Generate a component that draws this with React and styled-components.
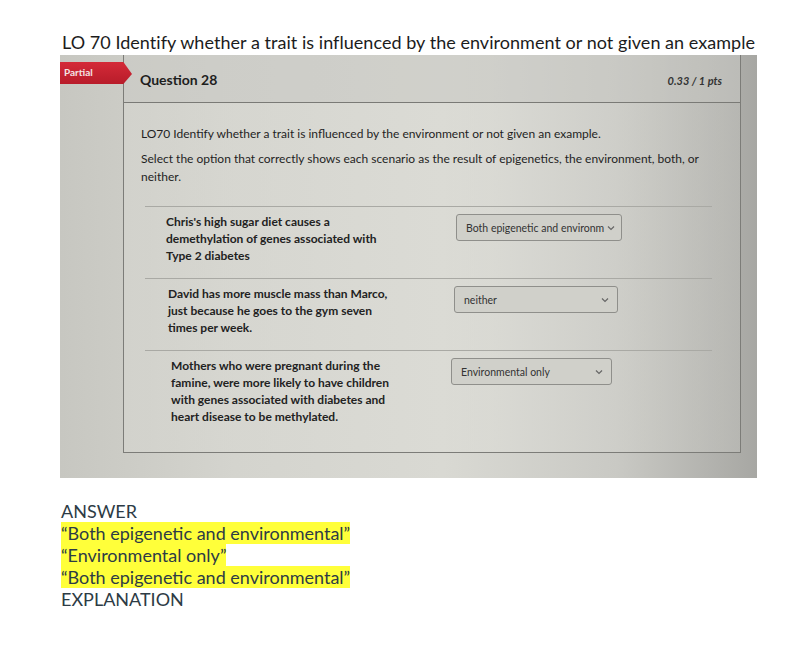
import React from "react";
import styled, { createGlobalStyle } from "styled-components";

const GlobalStyle = createGlobalStyle`
  body {
    margin: 0;
    background: #ffffff;
    font-family: Lato, "Open Sans", sans-serif;
  }
`;

const rows = [
  {
    text: "Chris's high sugar diet causes a demethylation of genes associated with Type 2 diabetes",
    choice: "Both epigenetic and environm",
    shift: 0,
  },
  {
    text: "David has more muscle mass than Marco, just because he goes to the gym seven times per week.",
    choice: "neither",
    shift: 2,
  },
  {
    text: "Mothers who were pregnant during the famine, were more likely to have children with genes associated with diabetes and heart disease to be methylated.",
    choice: "Environmental only",
    shift: 5,
  },
];

const answers = [
  "“Both epigenetic and environmental”",
  "“Environmental only”",
  "“Both epigenetic and environmental”",
];

export default function App() {
  return (
    <Page>
      <GlobalStyle />
      <Title>LO 70 Identify whether a trait is influenced by the environment or not given an example</Title>
      <Photo>
        <Badge>Partial</Badge>
        <Card>
          <CardHeader>
            <QuestionName>Question 28</QuestionName>
            <Points>0.33 / 1 pts</Points>
          </CardHeader>
          <CardBody>
            <Prompt>LO70 Identify whether a trait is influenced by the environment or not given an example.</Prompt>
            <Prompt $gap>
              Select the option that correctly shows each scenario as the result of epigenetics, the environment, both, or neither.
            </Prompt>
            <Matches>
              {rows.map((r) => (
                <MatchRow key={r.choice} $shift={r.shift}>
                  <Scenario>{r.text}</Scenario>
                  <Select $shift={r.shift}>
                    <span>{r.choice}</span>
                    <svg width="8" height="6" viewBox="0 0 8 6">
                      <path d="M1 1.5 L4 4.5 L7 1.5" fill="none" stroke="#666" strokeWidth="1.2" />
                    </svg>
                  </Select>
                </MatchRow>
              ))}
            </Matches>
          </CardBody>
        </Card>
      </Photo>
      <Answer>
        <Line>ANSWER</Line>
        {answers.map((a, i) => (
          <Line key={i}>
            <Mark>{a}</Mark>
          </Line>
        ))}
        <Line>EXPLANATION</Line>
      </Answer>
    </Page>
  );
}

const Page = styled.div`
  width: 795px;
  padding: 30px 0 0 60px;
  box-sizing: border-box;
`;

const Title = styled.div`
  font-family: Lato, sans-serif;
  font-size: 18px;
  line-height: 24px;
  color: #1c1c1c;
  margin-left: 2px;
  white-space: nowrap;
  letter-spacing: 0.04px;
`;

const Photo = styled.div`
  position: relative;
  width: 697px;
  height: 423px;
  margin-top: 1px;
  padding: 0 16px 26px 63px;
  box-sizing: border-box;
  background: linear-gradient(90deg, #c7c7c1 0%, #d4d4ce 25%, #d9d9d3 55%, #c9c9c4 80%, #a7a7a3 100%);
  overflow: hidden;
`;

const Badge = styled.div`
  position: absolute;
  left: 0;
  top: 7px;
  width: 72px;
  height: 22px;
  padding-left: 4px;
  box-sizing: border-box;
  background: linear-gradient(180deg, #d42a38, #b81c2a);
  clip-path: polygon(0 0, 88% 0, 100% 55%, 88% 100%, 0 100%);
  color: #f4e4e4;
  font-size: 10px;
  font-weight: 700;
  line-height: 20px;
  z-index: 2;
`;

const Card = styled.div`
  height: 100%;
  border: 1px solid #7c7c78;
  border-top: none;
  display: flex;
  flex-direction: column;
  background: linear-gradient(90deg, rgba(214,214,208,0.6), rgba(222,222,216,0.5) 60%, rgba(200,200,195,0.4));
`;

const CardHeader = styled.div`
  height: 47px;
  border-bottom: 1px solid #7a7a76;
  display: flex;
  align-items: center;
  justify-content: space-between;
  padding: 0 18px 0 16px;
  background: rgba(195, 195, 190, 0.45);
`;

const QuestionName = styled.div`
  font-size: 14px;
  font-weight: 700;
  color: #1e1e1e;
  padding-top: 2px;
`;

const Points = styled.div`
  font-size: 11px;
  font-weight: 700;
  font-style: italic;
  color: #333;
  padding-top: 4px;
`;

const CardBody = styled.div`
  padding: 22px 0 0 17px;
`;

const Prompt = styled.p`
  margin: ${(p) => (p.$gap ? "7px" : "0")} 0 0;
  font-size: 12px;
  line-height: 18px;
  color: #1f1f1f;
  max-width: 575px;
`;

const Matches = styled.div`
  margin: 20px 28px 0 4px;
`;

const MatchRow = styled.div`
  display: flex;
  align-items: flex-start;
  border-top: 1px solid #a9a9a4;
  height: 72px;
  padding: 6px 0 0 ${(p) => 21 + p.$shift}px;
  box-sizing: border-box;
`;

const Scenario = styled.div`
  width: 222px;
  font-size: 12px;
  font-weight: 700;
  line-height: 17px;
  color: #222;
`;

const Select = styled.div`
  margin: 1px 0 0 ${(p) => 68 - p.$shift * 2}px;
  width: ${(p) => 166 - p.$shift}px;
  height: 27px;
  border: 1px solid #8f8f8b;
  border-radius: 3px;
  background: #d0d0ca;
  display: flex;
  align-items: center;
  justify-content: space-between;
  padding: 0 8px 0 9px;
  box-sizing: border-box;
  font-size: 10.5px;
  color: #333;
  span {
    white-space: nowrap;
  }
  svg {
    flex-shrink: 0;
    margin-left: 3px;
  }
`;

const Answer = styled.div`
  margin-top: 22px;
  margin-left: 1px;
  font-family: Lato, sans-serif;
  font-size: 18px;
  line-height: 22px;
  color: #2d3b45;
`;

const Line = styled.div``;

const Mark = styled.span`
  display: inline-block;
  background: #ffff3a;
`;
